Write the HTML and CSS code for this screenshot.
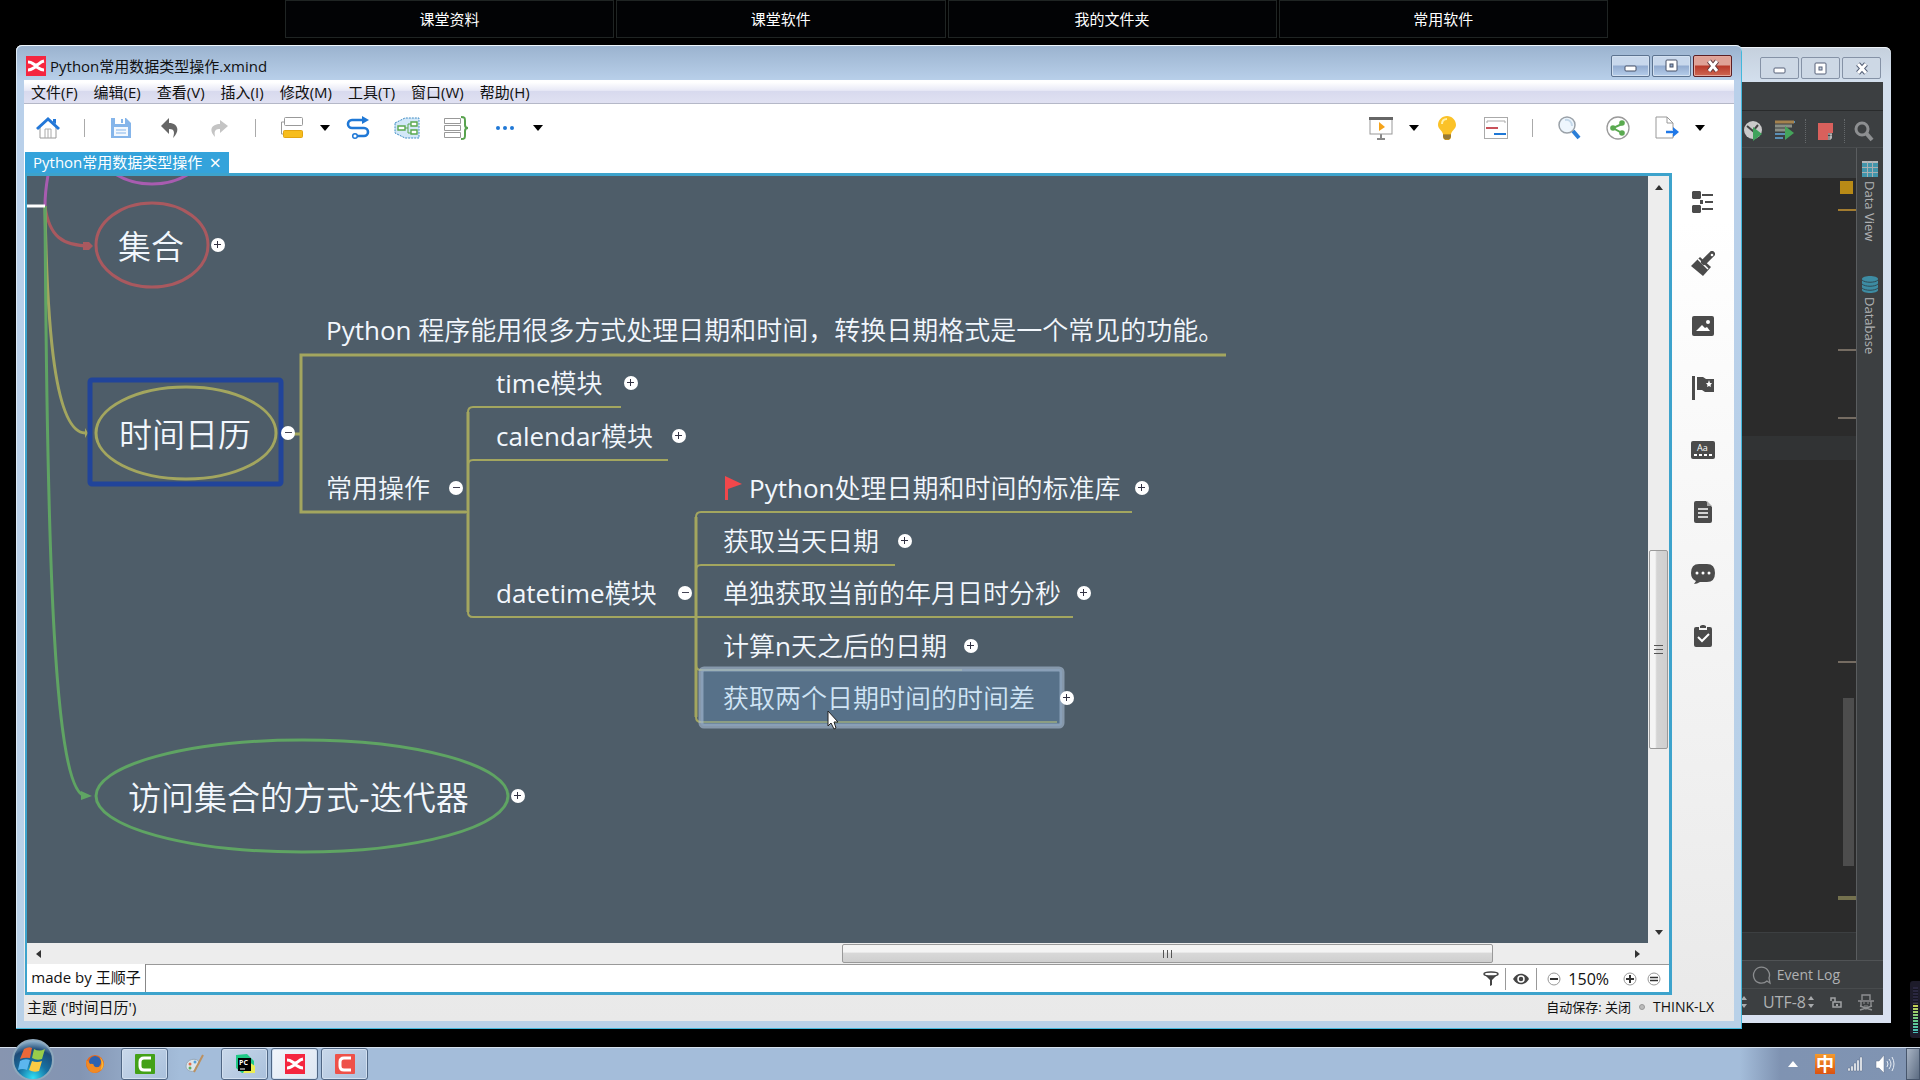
FILE: index.html
```html
<!DOCTYPE html>
<html lang="zh-CN">
<head>
<meta charset="utf-8">
<title>Python常用数据类型操作.xmind</title>
<link rel="stylesheet" href="styles.css">
</head>
<body>
<div class="desktop">
  <nav class="launcher">
    <a href="#">课堂资料</a><a href="#">课堂软件</a><a href="#">我的文件夹</a><a href="#">常用软件</a>
  </nav>

  <section class="window ide">
    <header class="titlebar">
      <div class="captions">
        <button class="cap" aria-label="最小化"><svg width="13" height="14"><rect x="1" y="7" width="11" height="5" rx="1" fill="#fff" stroke="#566178"/></svg></button>
        <button class="cap" aria-label="最大化"><svg width="13" height="14"><rect x="1" y="2" width="11" height="11" rx="1" fill="#fff" stroke="#566178"/><rect x="5" y="6" width="3" height="3" fill="#c8d3e3" stroke="#566178"/></svg></button>
        <button class="cap" aria-label="关闭"><svg width="14" height="14"><path d="M3 3L11 12M11 3L3 12" stroke="#566178" stroke-width="5"/><path d="M3 3L11 12M11 3L3 12" stroke="#fff" stroke-width="3"/></svg></button>
      </div>
    </header>
    <div class="ide-body">
      <div class="ide-menu"></div>
      <div class="ide-tools">
        <button aria-label="运行"><svg width="22" height="22"><circle cx="10" cy="10" r="9" fill="#c9c9c9"/><path d="M4 6L10 11L15 5" stroke="#444" stroke-width="2" fill="none"/><path d="M10 7L19 14L10 21Z" fill="#3fa35b"/></svg></button>
        <button aria-label="并发"><svg width="22" height="22"><path d="M3 2H21M1 14H12M1 18H9" stroke="#5b8fb5" stroke-width="2"/><path d="M1 2H20" stroke="#a4824e" stroke-width="3"/><path d="M1 6H18M1 10H13" stroke="#8a8f86" stroke-width="3"/><path d="M11 6L20 13L11 20Z" fill="#45a45b"/></svg></button>
        <i class="dots"></i>
        <button aria-label="停止"><svg width="20" height="22"><rect x="3" y="3" width="15" height="17" fill="#d9605c"/><rect x="13" y="13" width="5" height="7" fill="#3c3f41"/><path d="M13 14H17M13 17H17M16 14V19H13" stroke="#ddd" fill="none"/></svg></button>
        <i class="dots"></i>
        <button aria-label="搜索"><svg width="20" height="22"><circle cx="8" cy="9" r="6" stroke="#8d8f91" stroke-width="3" fill="none"/><path d="M12 13L18 20" stroke="#8d8f91" stroke-width="4"/></svg></button>
      </div>
      <div class="ide-main">
        <div class="ide-editor">
          <div class="ide-tabs"></div>
          <div class="code">
            <i class="caret-row"></i><i class="status-square"></i><i class="thumb"></i>
            <i class="mark warn"></i><i class="mark m2"></i><i class="mark m3"></i><i class="mark m4"></i><i class="mark m5"></i>
          </div>
          <div class="ide-crumbs"></div>
        </div>
        <aside class="ide-side">
          <button><svg width="16" height="16"><path d="M0 0H16V16H0Z" fill="#4195ab"/><path d="M0 1H16" stroke="#b3b8bb" stroke-width="2"/><path d="M5.500 0V16M10.500 0V16M0 6.500H16M0 11.500H16" stroke="#a9afb2" stroke-width="1"/></svg><span>Data View</span></button>
          <button><svg width="16" height="17"><path d="M0 3C0-1 16-1 16 3V14C16 18 0 18 0 14Z" fill="#3d8ca3"/><path d="M0 4C3 7 13 7 16 4M0 8C3 11 13 11 16 8M0 12C3 15 13 15 16 12" stroke="#304a54" fill="none"/></svg><span>Database</span></button>
        </aside>
      </div>
      <div class="ide-log"><svg width="20" height="20"><path d="M15 16A8 8 0 1 1 17 13L18 18Z" fill="none" stroke="#8b8d8f" stroke-width="1.3"/></svg><span>Event Log</span></div>
      <div class="ide-status">
        <svg width="6" height="12"><path d="M3 0L6 4H0ZM3 12L6 8H0Z" fill="#a9abad"/></svg>
        <button class="enc">UTF-8<svg width="6" height="12"><path d="M3 0L6 4H0ZM3 12L6 8H0Z" fill="#a9abad"/></svg></button>
        <svg width="12" height="12"><path d="M1 5V2H5V6M3 6H11V11H3Z" fill="none" stroke="#a0a2a4" stroke-width="1.5"/><path d="M6 8H8V10H6Z" fill="#a0a2a4"/></svg>
        <svg width="16" height="18"><path d="M4 7V2H12V7M0 8H16M3 8V13L8 16L13 13V8M2 17L14 13M14 17L2 13" fill="none" stroke="#8d8f91" stroke-width="1.4"/><path d="M5 10H7M9 10H11M6 13H10" stroke="#8d8f91"/></svg>
      </div>
    </div>
  </section>

  <section class="window xmind">
    <header class="titlebar">
      <svg class="appicon" width="20" height="20" viewBox="0 0 20 20"><rect width="20" height="20" fill="#f5263f"/><path d="M2 6C7 6 7 9 10 9S13 6 18 5M2 14C7 14 7 11 10 11S13 14 18 14" stroke="#fff" stroke-width="3" fill="none"/></svg>
      <h1>Python常用数据类型操作.xmind</h1>
      <div class="captions">
        <button class="cap" aria-label="最小化"><svg width="13" height="14"><rect x="1" y="7" width="11" height="5" rx="1" fill="#fff" stroke="#465066"/></svg></button>
        <button class="cap" aria-label="最大化"><svg width="13" height="14"><rect x="1" y="1" width="11" height="11" rx="1" fill="#fff" stroke="#465066"/><rect x="5" y="5" width="3" height="3" fill="#94abcd" stroke="#465066"/></svg></button>
        <button class="cap close" aria-label="关闭"><svg width="14" height="14"><path d="M3 2L11 12M11 2L3 12" stroke="#5d3a3f" stroke-width="5"/><path d="M3 2L11 12M11 2L3 12" stroke="#fff" stroke-width="3"/></svg></button>
      </div>
    </header>
    <div class="content">
      <nav class="menubar">
        <button>文件(F)</button><button>编辑(E)</button><button>查看(V)</button><button>插入(I)</button><button>修改(M)</button><button>工具(T)</button><button>窗口(W)</button><button>帮助(H)</button>
      </nav>
      <div class="toolbar">
        <button aria-label="主页"><svg width="24" height="24"><path d="M4 11V22H20V11" fill="#fff" stroke="#999"/><path d="M9 22V13H15V22M12 13V22" fill="none" stroke="#aaa"/><path d="M1 13L12 3L23 13" fill="none" stroke="#2277d8" stroke-width="3"/><path d="M17 3H20V8L17 6Z" fill="#2277d8"/></svg></button>
        <i class="sep"></i>
        <button aria-label="保存"><svg width="22" height="22"><path d="M1 1H16L21 6V21H1Z" fill="#85b5ea"/><rect x="5" y="1" width="10" height="6" fill="#fff"/><rect x="11" y="2" width="2" height="4" fill="#85b5ea"/><rect x="4" y="10" width="14" height="9" fill="#f3f8fe"/><path d="M6 13H16M6 16H16" stroke="#85b5ea"/></svg></button>
        <button aria-label="撤销"><svg width="20" height="22"><path d="M9 1V6C17 6 21 13 13 21C15 14 14 12 9 12V17L1 9Z" fill="#666"/></svg></button>
        <button aria-label="重做"><svg width="20" height="22"><path d="M11 3V7C3 7 -1 13 6 20C5 14 6 12 11 12V16L19 9Z" fill="#c4c4c4"/></svg></button>
        <i class="sep"></i>
        <button aria-label="主题"><svg width="24" height="22"><path d="M5 5H1.500V17H4" fill="none" stroke="#999"/><rect x="4.500" y="0.500" width="18" height="8" rx="1" fill="#fff" stroke="#999"/><rect x="3.500" y="13.500" width="19" height="7" rx="1" fill="#f7bd1d" stroke="#e2a411"/></svg></button>
        <button class="drop" aria-label="主题类型"></button>
        <button aria-label="联系"><svg width="24" height="24"><path d="M18 4H6A4 4 0 0 0 6 12H18A4 4 0 0 1 18 20H10" fill="none" stroke="#1f78d6" stroke-width="2.6"/><path d="M16 0L23 4L16 8Z" fill="#1f78d6"/><circle cx="9" cy="20" r="2.3" fill="#fff" stroke="#1f78d6" stroke-width="1.5"/></svg></button>
        <button aria-label="外框"><svg width="28" height="24"><path d="M2 7L12 2H26V22H12L2 17Z" fill="#d3e8f8" stroke="#3e8cc4" stroke-dasharray="2 1"/><path d="M12 12H15M18 8H15V17H18" stroke="#5aa84e" fill="none"/><path d="M5 10H12V14H5ZM18 6H24V10H18ZM18 14H24V18H18Z" fill="#fff" stroke="#5aa84e" stroke-width="1.4"/></svg></button>
        <button aria-label="概要"><svg width="26" height="24"><path d="M1.500 2.500H17.500V7.500H1.500ZM1.500 9.500H17.500V14.500H1.500ZM1.500 16.500H17.500V21.500H1.500Z" fill="#fff" stroke="#999"/><path d="M18 1C22 1 22 2 22 5V9C22 11 23 12 25 12C23 12 22 13 22 15V19C22 22 22 23 18 23" fill="none" stroke="#58a24e" stroke-width="2"/></svg></button>
        <button aria-label="更多"><svg width="20" height="6"><circle cx="3" cy="3" r="2" fill="#1f78d6"/><circle cx="10" cy="3" r="2" fill="#1f78d6"/><circle cx="17" cy="3" r="2" fill="#1f78d6"/></svg></button>
        <button class="drop" aria-label="更多选项"></button>
        <span class="grow"></span>
        <button aria-label="演示"><svg width="26" height="24"><path d="M13 17V23M9 23H17" stroke="#888" stroke-width="2"/><rect x="2" y="3" width="22" height="15" fill="#fff" stroke="#999"/><rect x="1" y="1" width="24" height="3" fill="#666"/><path d="M11 6L17 11L11 15Z" fill="#f5a31a"/></svg></button>
        <button class="drop" aria-label="演示选项"></button>
        <button aria-label="头脑风暴"><svg width="20" height="26"><path d="M10 1C15 1 19 5 19 10C19 14 15 15 14 19H6C5 15 1 14 1 10C1 5 5 1 10 1Z" fill="#fbc228"/><path d="M5 9C5 6 7 4 10 4" stroke="#fff0a8" stroke-width="2" fill="none"/><path d="M6 19H14V23L12 25H8L6 23Z" fill="#c49320"/><path d="M6 21H14M7 23H13" stroke="#6b6250"/></svg></button>
        <button aria-label="甘特图"><svg width="24" height="22"><rect x="0.500" y="0.500" width="23" height="21" fill="#fff" stroke="#aaa"/><path d="M3 6V4H21V6" fill="none" stroke="#aaa"/><path d="M2 11H14" stroke="#c9515a" stroke-width="2"/><path d="M10 17H22" stroke="#1f78d6" stroke-width="2"/></svg></button>
        <i class="sep"></i>
        <button aria-label="搜索"><svg width="24" height="26"><circle cx="10" cy="10" r="8" fill="#eef6fd" stroke="#9aa1a8" stroke-width="1.500"/><path d="M8 5C12 4 15 7 15 11" fill="none" stroke="#c4d8ea" stroke-width="2"/><path d="M16 16L22 23" stroke="#2b7fd8" stroke-width="4"/></svg></button>
        <button aria-label="分享"><svg width="26" height="26"><circle cx="13" cy="13" r="11" fill="#fff" stroke="#9a9a9a" stroke-width="1.300"/><path d="M17 9L8 13L17 18" fill="none" stroke="#5aaa50" stroke-width="2"/><circle cx="17" cy="8" r="2.800" fill="#5aaa50"/><circle cx="8" cy="13" r="2.800" fill="#5aaa50"/><circle cx="17" cy="18" r="2.800" fill="#5aaa50"/></svg></button>
        <button aria-label="导出"><svg width="24" height="24"><path d="M18 14V7L12 1H1V22H18V18M12 1V7H18" fill="#fff" stroke="#999"/><path d="M11 16H20" stroke="#1f78e8" stroke-width="2.500"/><path d="M18 11L24 16L18 21Z" fill="#1f78e8"/></svg></button>
        <button class="drop" aria-label="导出选项"></button>
      </div>

      <div class="workspace">
        <main class="pane">
          <div class="tabs"><div class="tab"><span>Python常用数据类型操作</span><button aria-label="关闭标签">×</button></div></div>
          <div class="editor">
            <div class="viewport">
              <div class="canvas">
                <svg class="lines" width="1621" height="767" viewBox="27 176 1621 767" fill="none" stroke-width="3">
                  <g stroke="#a85cb0"><ellipse cx="152" cy="143" rx="56" ry="41"/><path d="M45 206Q45 190 49 170"/></g>
                  <g stroke="#a9595f"><ellipse cx="152" cy="245" rx="56" ry="42"/><path d="M45 206C49 236 62 246 90 246"/><path d="M83 242H89L93 246L89 250H83Z" fill="#a9595f" stroke="none"/></g>
                  <g stroke="#a3a65f">
                    <path d="M45 206C47 330 55 432 85 433"/><path d="M85 428V438L88 433Z" fill="#a3a65f" stroke="none"/>
                    <ellipse cx="186" cy="433" rx="90" ry="46"/>
                    <path d="M293 434H301M1226 355H301V512H466"/>
                    <path d="M468 412V612M696 517V717"/>
                    <g stroke-width="2">
                    <path d="M621 407H473Q468 407 468 412M468 612Q468 617 473 617H696M668 460H473Q468 460 468 465M450 512H468"/>
                    <path d="M1132 512H701Q696 512 696 517M696 717Q696 722 701 722H1057M895 565H701Q696 565 696 570M962 670H701Q696 670 696 665M690 617H1073"/>
                    </g>
                  </g>
                  <g stroke="#5fa463"><path d="M45 206C47 560 54 796 86 796"/><path d="M81 791L92 796L81 800Z" fill="#5fa463" stroke="none"/><ellipse cx="302" cy="796" rx="206" ry="56"/></g>
                  <path d="M27 206H45" stroke="#fff"/>
                  <rect x="90" y="380" width="191" height="104" rx="2" stroke="#21449a" stroke-width="5"/>
                  <rect x="701" y="669" width="361" height="57" rx="3" fill="#6692b8" fill-opacity=".4" stroke="#a5b9cf" stroke-opacity=".65" stroke-width="5"/>
                </svg>
                <div class="node big n-set"><span>集合</span><button class="tg plus" aria-label="展开"></button></div>
                <div class="node big n-date"><span>时间日历</span><button class="tg" aria-label="折叠"></button></div>
                <div class="node big n-iter"><span>访问集合的方式<span class="en">-</span>迭代器</span><button class="tg plus" aria-label="展开"></button></div>
                <div class="node n-intro"><span><span class="en">Python</span> 程序能用很多方式处理日期和时间，转换日期格式是一个常见的功能。</span></div>
                <div class="node n-ops"><span>常用操作</span><button class="tg" aria-label="折叠"></button></div>
                <div class="node n-time"><span><span class="en">time</span>模块</span><button class="tg plus" aria-label="展开"></button></div>
                <div class="node n-cal"><span><span class="en">calendar</span>模块</span><button class="tg plus" aria-label="展开"></button></div>
                <div class="node n-dt"><span><span class="en">datetime</span>模块</span><button class="tg" aria-label="折叠"></button></div>
                <div class="node n-std"><svg class="flag" width="20" height="24"><path d="M2 0L19 8L5 13V24H2Z" fill="#f2474b"/></svg><span><span class="en">Python</span>处理日期和时间的标准库</span><button class="tg plus" aria-label="展开"></button></div>
                <div class="node n-today"><span>获取当天日期</span><button class="tg plus" aria-label="展开"></button></div>
                <div class="node n-parts"><span>单独获取当前的年月日时分秒</span><button class="tg plus" aria-label="展开"></button></div>
                <div class="node n-after"><span>计算<span class="en">n</span>天之后的日期</span><button class="tg plus" aria-label="展开"></button></div>
                <div class="node n-diff"><span>获取两个日期时间的时间差</span><button class="tg plus" aria-label="展开"></button></div>
                <svg class="pointer" width="13" height="20"><path d="M1 1V16L4 13L7 19L9 18L7 12H11Z" fill="#fff" stroke="#222"/></svg>
              </div>
              <div class="vscroll"><button class="up" aria-label="向上"></button><i></i><b></b><u></u><button class="down" aria-label="向下"></button></div>
            </div>
            <div class="hscroll"><button class="left" aria-label="向左"></button><i></i><b></b><u></u><button class="right" aria-label="向右"></button></div>
            <div class="sheets">
              <button class="sheet">made by 王顺子</button>
              <div class="zoom">
                <button aria-label="筛选"><svg width="16" height="16"><path d="M1 3L7 9V15L9 14V9L15 3Z" fill="#444"/><ellipse cx="8" cy="3" rx="7" ry="2" fill="#fff" stroke="#444" stroke-width="1.500"/></svg></button>
                <button class="eye" aria-label="查看"><svg width="16" height="12"><path d="M0 6C4-1 12-1 16 6C12 13 4 13 0 6Z" fill="#444"/><circle cx="8" cy="6" r="3" fill="#444" stroke="#fff" stroke-width="1.500"/></svg></button>
                <button aria-label="缩小"><svg width="14" height="14"><circle cx="7" cy="7" r="6" fill="none" stroke="#999"/><path d="M3 7H11" stroke="#333" stroke-width="2"/></svg></button>
                <span>150%</span>
                <button aria-label="放大"><svg width="14" height="14"><circle cx="7" cy="7" r="6" fill="none" stroke="#999"/><path d="M3 7H11M7 3V11" stroke="#333" stroke-width="2"/></svg></button>
                <button aria-label="实际大小"><svg width="14" height="14"><circle cx="7" cy="7" r="6" fill="none" stroke="#999"/><path d="M3 5.500H11M3 8.500H11" stroke="#333" stroke-width="1.500"/></svg></button>
              </div>
            </div>
          </div>
        </main>
        <aside class="panels">
          <button aria-label="大纲"><svg width="22" height="24"><path d="M1 1H8L9 2V8L8 9H1L0 8V2ZM1 15H8L9 16V22L8 23H1L0 22V16ZM8 10H11V14H8Z" fill="#4b4b4b"/><path d="M10 5H21M13 12H21M10 19H21" stroke="#4b4b4b" stroke-width="2"/></svg></button>
          <button aria-label="格式"><svg width="24" height="26"><path d="M9 6L20 16L12 25L0 15Z" fill="#4b4b4b"/><path d="M7 8L17 18" stroke="#fff" stroke-width="1.500"/><path d="M13 11L21 3" stroke="#4b4b4b" stroke-width="6" stroke-linecap="round"/><circle cx="21" cy="4" r="1.300" fill="#fff"/></svg></button>
          <button aria-label="图片"><svg width="22" height="20"><rect width="22" height="20" rx="2" fill="#4b4b4b"/><path d="M4 15L10 9L13 12L15 11L18 15Z" fill="#fff"/><circle cx="16" cy="6" r="2" fill="#fff"/></svg></button>
          <button aria-label="标记"><svg width="22" height="24"><path d="M0 0H3V24H0ZM5 1H11L14 3H22V16H13L10 14H5Z" fill="#4b4b4b"/><path d="M17 4L18 7L20 7L18.500 9L19 11L17 10L15 11L15.500 9L14 7L16 7Z" fill="#fff"/></svg></button>
          <button aria-label="标签"><svg width="24" height="18"><rect width="24" height="18" rx="2" fill="#4b4b4b"/><path d="M3 14H21" stroke="#fff" stroke-width="2" stroke-dasharray="3 2"/><text x="6" y="10" class="aa">Aa</text></svg></button>
          <button aria-label="备注"><svg width="18" height="22"><path d="M2 0H12L18 6V20Q18 22 16 22H2Q0 22 0 20V2Q0 0 2 0Z" fill="#4b4b4b"/><path d="M13 0V5H18" fill="#aaa"/><path d="M4 8H14M4 12H14M4 16H14" stroke="#fff" stroke-width="1.500"/></svg></button>
          <button aria-label="评论"><svg width="24" height="20"><path d="M8 0H16Q24 0 24 9Q24 18 16 18H9Q6 20 3 20L5 17Q0 15 0 9Q0 0 8 0Z" fill="#4b4b4b"/><circle cx="6" cy="9" r="1.500" fill="#fff"/><circle cx="12" cy="9" r="1.500" fill="#fff"/><circle cx="18" cy="9" r="1.500" fill="#fff"/></svg></button>
          <button aria-label="任务"><svg width="18" height="22"><path d="M2 2H5V5H13V2H16Q18 2 18 4V20Q18 22 16 22H2Q0 22 0 20V4Q0 2 2 2ZM6 3V1L8 0H10L12 1V3Z" fill="#4b4b4b"/><path d="M4 12L8 16L15 9" fill="none" stroke="#fff" stroke-width="2"/></svg></button>
        </aside>
      </div>
      <footer class="status"><span>主题 ('时间日历')</span><span class="save">自动保存: 关闭</span><i></i><span class="user">THINK-LX</span></footer>
    </div>
  </section>

  <div class="meter"></div>

  <footer class="taskbar">
    <button class="start" aria-label="开始"><svg width="44" height="44" viewBox="0 0 44 44"><defs><radialGradient id="orb" cx=".5" cy=".95" r=".95"><stop offset="0" stop-color="#2fe0f5"/><stop offset=".4" stop-color="#1671a3"/><stop offset=".75" stop-color="#1d4b77"/><stop offset="1" stop-color="#9fc0d8"/></radialGradient></defs><circle cx="22" cy="22" r="20" fill="url(#orb)" stroke="#8fa9bd" stroke-width="2"/><path d="M13 11Q18 8 21 10L19 20Q14 19 9 21Z" fill="#ea6838"/><path d="M23 11Q28 14 34 11L31 21Q26 23 21 20Z" fill="#98cc4b"/><path d="M9 23Q14 20 19 22L16 32Q12 30 7 32Z" fill="#5cb6ee"/><path d="M21 23Q26 25 31 23L28 33Q23 35 18 32Z" fill="#fbcb45"/></svg></button>
    <button class="task" aria-label="Firefox"><svg width="20" height="20"><circle cx="10" cy="10" r="9" fill="#e8681c"/><circle cx="10" cy="8" r="6" fill="#2c62b0"/><path d="M1 6Q4 7 5 10Q9 9 9 12Q12 15 17 11Q16 19 9 19Q1 18 1 6Z" fill="#f08a24"/><path d="M15 3Q22 11 15 17Q18 10 15 3Z" fill="#f8b932"/></svg></button>
    <button class="task open" aria-label="Camtasia"><svg width="20" height="20"><rect width="20" height="20" rx="1" fill="#43a117"/><path d="M16 4H9Q5 4 5 8V12Q5 16 9 16H16" fill="none" stroke="#fff" stroke-width="3"/></svg></button>
    <button class="task" aria-label="画图"><svg width="20" height="20"><path d="M1 12C1 5 12 3 14 8C15 12 10 11 11 15C10 19 1 18 1 12Z" fill="#dce5ea" stroke="#98a9b8"/><circle cx="5" cy="10" r="1.500" fill="#e66a4a"/><circle cx="10" cy="8" r="1.500" fill="#57a0d8"/><circle cx="5" cy="14" r="1.500" fill="#5aae60"/><path d="M9 18L18 1" stroke="#bc9160" stroke-width="2"/></svg></button>
    <button class="task open" aria-label="PyCharm"><svg width="20" height="20"><path d="M1 1L12 0L19 7L19 19H7L1 14Z" fill="#20c986"/><path d="M14 8L20 12V19H8Z" fill="#ecee55"/><rect x="3" y="4" width="13" height="13" fill="#000"/><text x="4" y="11" class="pc">PC</text><path d="M5 15H10" stroke="#fff" stroke-width="1"/></svg></button>
    <button class="task open active" aria-label="XMind"><svg width="20" height="20"><rect width="20" height="20" fill="#f5263f"/><path d="M2 6C7 6 7 9 10 9S13 6 18 5M2 14C7 14 7 11 10 11S13 14 18 14" stroke="#fff" stroke-width="3" fill="none"/></svg></button>
    <button class="task open" aria-label="Camtasia 录制"><svg width="20" height="20"><rect width="20" height="20" rx="1" fill="#ee5149"/><path d="M16 4H9Q5 4 5 8V12Q5 16 9 16H16" fill="none" stroke="#fff" stroke-width="3"/></svg></button>
    <div class="tray">
      <button aria-label="显示隐藏的图标"><svg width="12" height="6"><path d="M6 0L11 6H1Z" fill="#fff"/></svg></button>
      <button class="ime">中</button>
      <button aria-label="网络"><svg width="16" height="16"><path d="M1 12H3V15H1ZM4 10H6V15H4ZM7 7H9V15H7ZM10 4H12V15H10ZM13 1H15V15H13Z" fill="#fff" stroke="#61718b" stroke-width=".5"/></svg></button>
      <button aria-label="音量"><svg width="20" height="20"><path d="M1 7H4L9 1V19L4 14H1Z" fill="#fff" stroke="#65748c" stroke-width=".5"/><path d="M12 7Q14 10 12 13M14 5Q18 10 14 15M17 3Q21 10 17 17" fill="none" stroke="#e8eef5"/></svg></button>
    </div>
    <button class="peek" aria-label="显示桌面"></button>
  </footer>
</div>
</body>
</html>
```
FILE: styles.css
```css
* { box-sizing: border-box; }
body { margin: 0; background: #000; font: 15px/20px "Open Sans", "Noto Sans CJK SC", sans-serif; color: #111; }
button { border: 0; margin: 0; padding: 0; background: none; font: inherit; color: inherit; }
svg { display: block; flex: none; }
.desktop { position: relative; height: 100vh; overflow: hidden; display: flex; flex-direction: column; justify-content: space-between; }

.launcher { display: grid; grid-template-columns: repeat(4, 1fr); gap: 2px; height: 38px; padding: 0 312px 0 285px; }
.launcher a { display: flex; align-items: center; justify-content: center; border: 1px solid #1f2423; background: #020305; color: #fff; text-decoration: none; }

.window { position: absolute; display: flex; flex-direction: column; padding: 0 8px 8px; border-radius: 6px 6px 0 0; }
.titlebar { display: flex; align-items: center; height: 35px; gap: 4px; flex: none; }
.captions { margin-left: auto; display: flex; gap: 2px; padding-right: 2px; padding-top: 6px; }
.cap { width: 39px; height: 22px; display: flex; align-items: center; justify-content: center; border: 1px solid #5c7390; border-radius: 2px; background: linear-gradient(#c8d8ec 0 45%, #93acd0 50%, #b5cdea); box-shadow: inset 0 0 0 1px #d2e0f0; }
.cap.close { border-color: #5c1f24; background: linear-gradient(#dfa297 0 45%, #b8392a 50%, #cf6853); box-shadow: inset 0 0 0 1px #e4a79c; }

/* XMind */
.xmind { left: 16px; right: 178px; top: 45px; bottom: 51px; background: linear-gradient(#9ab2ce, #b9d0ea 36px, #b9d1e8); box-shadow: inset 0 1px #eef5fb, inset -1px -1px #42b8dc, inset 1px 0 #dce9f5; }
.appicon { margin-left: 2px; }
h1 { margin: 0; font: inherit; }
.xmind .titlebar { padding-top: 6px; }
.xmind .captions { padding-top: 0; }
.content { flex: 1; display: flex; flex-direction: column; min-height: 0; background: linear-gradient(#fff 15%, #e9e9e9); }
.menubar { display: flex; gap: 16px; height: 24px; padding-left: 7px; background: linear-gradient(#fff 10%, #e8e9f6 45%, #d8daee 50%, #e0e1f2); border-bottom: 1px solid #b5b8c8; flex: none; }
.toolbar { display: flex; align-items: center; gap: 21px; height: 48px; padding: 0 36px 0 10px; flex: none; }
.toolbar button { width: 28px; height: 32px; display: flex; align-items: center; justify-content: center; }
.toolbar .drop { width: 12px; margin: 0 -8px; }
.drop::before { content: ""; border: 5px solid transparent; border-top: 6px solid #000; border-bottom: 0; }
.sep { width: 1px; height: 18px; margin: 0 1px; background: #aaa; }
.grow { flex: 1; }
.workspace { flex: 1; display: flex; min-height: 0; }
.pane { flex: 1; display: flex; flex-direction: column; min-width: 0; padding-left: 1px; }
.tabs { display: flex; height: 21px; flex: none; }
.tab { display: flex; gap: 7px; padding: 0 8px; background: #34a3db; color: #fff; }
.tab button { font-size: 20px; width: 12px; }
.editor { flex: 1; display: flex; flex-direction: column; min-height: 0; border: 3px solid #3da3cc; border-left-width: 2px; background: #fff; }
.viewport { flex: 1; display: flex; min-height: 0; }
.canvas { flex: 1; position: relative; overflow: hidden; background: #4e5d69; color: #f2f7fd; }
.lines { position: absolute; left: 0; top: 0; }
.node { position: absolute; display: flex; align-items: center; height: 40px; font-size: 26px; line-height: 40px; white-space: nowrap; font-weight: 350; }
.en { font-weight: 400; }
.big { font-size: 33px; }
.big > span { padding-top: 4px; }
.tg { width: 14px; height: 14px; margin-left: auto; border-radius: 50%; background: linear-gradient(#445, #445) 4px 6px / 7px 1px no-repeat #fff; }
.tg.plus { background: linear-gradient(#334, #334) 3px 6px / 7px 1px no-repeat, linear-gradient(#334, #334) 6px 3px / 1px 7px no-repeat, #fff; }
.flag { margin: 0 6px 0 0; }
.n-set { left: 91px; top: 49px; width: 107px; }
.n-date { left: 92px; top: 237px; width: 176px; }
.n-iter { left: 101px; top: 600px; width: 397px; }
.n-intro { left: 299px; top: 134px; }
.n-ops { left: 299px; top: 292px; width: 137px; }
.n-time { left: 469px; top: 187px; width: 142px; }
.n-cal { left: 469px; top: 240px; width: 190px; }
.n-dt { left: 469px; top: 397px; width: 196px; }
.n-std { left: 696px; top: 292px; width: 426px; }
.n-today { left: 696px; top: 345px; width: 189px; }
.n-parts { left: 696px; top: 397px; width: 368px; }
.n-after { left: 696px; top: 450px; width: 255px; }
.n-diff { left: 696px; top: 502px; width: 351px; color: #cfe4f5; }
.pointer { position: absolute; left: 800px; top: 534px; }
.vscroll, .hscroll { display: flex; background: #ededed; flex: none; }
.vscroll { width: 21px; flex-direction: column; padding: 0 1px; }
.hscroll { height: 21px; padding: 1px 21px 1px 0; }
.vscroll button { height: 22px; }
.hscroll button { width: 22px; }
.vscroll button, .hscroll button { display: flex; align-items: center; justify-content: center; flex: none; }
.vscroll button::before, .hscroll button::before { content: ""; border: 4px solid transparent; }
.up::before { border-top: 0 !important; border-bottom: 5px solid #333 !important; }
.down::before { border-bottom: 0 !important; border-top: 5px solid #333 !important; }
.left::before { border-left: 0 !important; border-right: 5px solid #333 !important; }
.right::before { border-right: 0 !important; border-left: 5px solid #333 !important; }
.vscroll i { flex: 353; } .vscroll b { flex: 198; } .vscroll u { flex: 172; }
.hscroll i { flex: 794; } .hscroll b { flex: 650; } .hscroll u { flex: 133; }
.vscroll b, .hscroll b { border: 1px solid #999; border-radius: 2px; }
.vscroll b { background: linear-gradient(#555, #555) center 45% / 9px 1px no-repeat, linear-gradient(#555, #555) center / 9px 1px no-repeat, linear-gradient(#555, #555) center 48% / 9px 1px no-repeat, linear-gradient(90deg, #f4f4f4 30%, #d4d4d4 40%, #cfcfcf); background-position: center calc(50% - 4px), center, center calc(50% + 4px), 0; }
.hscroll b { background: linear-gradient(#555, #555) center / 1px 8px no-repeat, linear-gradient(#555, #555) center / 1px 8px no-repeat, linear-gradient(#555, #555) center / 1px 8px no-repeat, linear-gradient(#f4f4f4 40%, #d8d8d8 50%, #cfcfcf); background-position: calc(50% - 4px) center, center, calc(50% + 4px) center, 0; }
.sheets { display: flex; height: 28px; flex: none; }
.sheet { width: 119px; padding-bottom: 2px; border-right: 1px solid #888; white-space: nowrap; }
.zoom { flex: 1; display: flex; align-items: center; justify-content: flex-end; border-top: 1px solid #999; padding-right: 8px; gap: 10px; font-size: 16px; }
.zoom .eye { height: 22px; padding: 0 7px; border: solid #999; border-width: 0 1px; display: flex; align-items: center; margin-left: -4px; }
.zoom span { margin-left: -3px; margin-right: 4px; }
.panels { width: 62px; padding-top: 19px; display: flex; flex-direction: column; align-items: center; }
.panels button { height: 62px; display: flex; align-items: center; }
.aa { font: 9px "Open Sans", sans-serif; fill: #fff; }
.status { display: flex; align-items: center; height: 26px; padding: 0 20px 2px 3px; flex: none; }
.save { margin-left: auto; font-size: 13px; }
.status i { width: 6px; height: 6px; margin: 0 8px; border-radius: 50%; border: 1px solid #999; background: #bbb; }
.user { font-size: 14px; }

/* PyCharm */
.ide { right: 29px; top: 47px; bottom: 57px; width: 200px; background: linear-gradient(#c5d0dd, #d3dfed 35px, #d9e1f1); box-shadow: inset 0 1px #eef3f8; }
.ide .cap { background: #cdd8e5; border-color: #8592a6; box-shadow: none; }
.ide-body { flex: 1; display: flex; flex-direction: column; min-height: 0; background: #3c3f41; color: #afb1b3; }
.ide-menu { height: 29px; border-bottom: 1px solid #292b2c; }
.ide-tools { height: 37px; display: flex; align-items: center; justify-content: flex-end; gap: 9px; padding: 3px 9px 0 0; border-bottom: 1px solid #494c4e; }
.dots { height: 24px; border-left: 1px dotted #65696b; }
.ide-main { flex: 1; display: flex; min-height: 0; }
.ide-editor { flex: 1; display: flex; flex-direction: column; border-right: 1px solid #5a5d5f; }
.ide-tabs { height: 30px; }
.code { flex: 1; position: relative; background: #2b2b2b; }
.code i { position: absolute; right: 0; }
.caret-row { left: 0; top: 258px; height: 24px; background: #313334; }
.code .status-square { right: 3px; top: 3px; width: 13px; height: 13px; background: #b88a16; }
.code .thumb { right: 2px; top: 520px; width: 11px; height: 168px; background: #4d4d4d; }
.mark { width: 18px; height: 2px; background: #756c62; }
.warn { top: 31px; background: #a27c30; }
.m2 { top: 171px; } .m3 { top: 239px; } .m4 { top: 483px; } .m5 { top: 718px; height: 4px; background: #74714e; }
.ide-crumbs { height: 28px; border-top: 1px solid #3c3f41; background: #323435; }
.ide-side { width: 26px; display: flex; flex-direction: column; align-items: center; padding-top: 13px; gap: 31px; font-size: 13px; line-height: 20px; }
.ide-side button { display: flex; flex-direction: column; align-items: center; gap: 4px; height: 84px; }
.ide-side span { writing-mode: vertical-rl; }
.ide-log { height: 28px; display: flex; align-items: center; justify-content: flex-end; gap: 5px; padding-right: 43px; border-top: 1px solid #505355; font-size: 14px; }
.ide-status { height: 27px; display: flex; align-items: center; justify-content: flex-end; padding-right: 9px; gap: 16px; font-size: 16px; border-top: 1px solid #484b4d; }
.enc { display: flex; align-items: center; gap: 2px; }

.meter { position: absolute; right: 0; bottom: 42px; width: 10px; height: 57px; border-radius: 3px 0 0 3px; border: solid #1d1b2a; border-width: 6px 2px 5px 3px; background: repeating-linear-gradient(transparent 0 2px, #151420 2px 3px), linear-gradient(#2a2740 35%, #c8d255 40%, #62c98f 75%, #49bdbd); }

/* Taskbar */
.taskbar { display: flex; height: 33px; padding-left: 11px; gap: 3px; border-top: 1px solid #d6e0ec; background: linear-gradient(90deg, #8795b0, #8395b3 80px, #a4bdda 180px, #a4bdda calc(100% - 180px), #7f93b2 calc(100% - 140px), #8094b2); position: relative; }
.start { width: 44px; height: 44px; margin-top: -10px; margin-right: 13px; flex: none; }
.task { width: 47px; display: flex; align-items: center; justify-content: center; border-radius: 3px; }
.task.open { border: 1px solid #4f6684; background: linear-gradient(135deg, #c9d8ea, #a9c0dc); box-shadow: inset 0 0 0 1px #d2e0f0; }
.task.active { background: linear-gradient(135deg, #f2f5fa, #dce6f2); }
.pc { font: bold 7px "Open Sans", sans-serif; fill: #fff; }
.tray { margin-left: auto; display: flex; align-items: center; gap: 12px; padding-right: 8px; }
.tray .ime { width: 20px; height: 20px; margin-left: 4px; background: linear-gradient(#f49a2c, #dc5210); color: #fff; font-weight: 700; font-size: 18px; }
.peek { width: 14px; border: 1px solid #47566c; background: linear-gradient(110deg, #a8b4c4, #5c6c82); }
```
